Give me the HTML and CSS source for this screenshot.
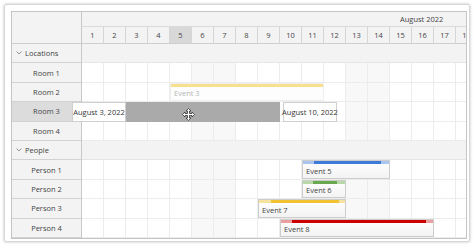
FILE: index.html
```html
<!DOCTYPE html>
<html>
<head>
<meta charset="utf-8">
<link rel="stylesheet" href="styles.css">
</head>
<body>
<div class="card">
  <div class="scheduler">
    <div class="rowheaders">
      <div class="corner"></div>
      <div class="rh group"><svg class="chev" width="6" height="4" viewBox="0 0 6 4"><polyline points="0.5,0.5 3,3 5.5,0.5" fill="none" stroke="#888" stroke-width="0.9"/></svg>Locations</div>
      <div class="rh">Room 1</div>
      <div class="rh">Room 2</div>
      <div class="rh active">Room 3</div>
      <div class="rh">Room 4</div>
      <div class="rh group"><svg class="chev" width="6" height="4" viewBox="0 0 6 4"><polyline points="0.5,0.5 3,3 5.5,0.5" fill="none" stroke="#888" stroke-width="0.9"/></svg>People</div>
      <div class="rh">Person 1</div>
      <div class="rh">Person 2</div>
      <div class="rh">Person 3</div>
      <div class="rh">Person 4</div>
    </div>
    <div class="main">
      <div class="month"><span class="month-label">August 2022</span></div>
      <div class="days">
        <div class="day">1</div><div class="day">2</div><div class="day">3</div><div class="day">4</div>
        <div class="day hl">5</div><div class="day">6</div><div class="day">7</div><div class="day">8</div>
        <div class="day">9</div><div class="day">10</div><div class="day">11</div><div class="day">12</div>
        <div class="day">13</div><div class="day">14</div><div class="day">15</div><div class="day">16</div>
        <div class="day">17</div><div class="day">18</div>
      </div>
      <div class="grid">
        <div class="row group"></div>
        <div class="row"></div>
        <div class="row">
          <div class="event ghost" style="left:88px;width:154px">
            <div class="bar"><div class="bar-fill" style="left:0;right:0"></div></div>
            <span class="etext">Event 3</span>
          </div>
        </div>
        <div class="row">
          <div class="label" style="left:-10px">August 3, 2022</div>
          <div class="shadow" style="left:44px;width:154px">
            <svg class="move" width="13" height="13" viewBox="0 0 13 13">
              <path d="M6.5 0.5 L9 3 L7.5 3 L7.5 5.5 L10 5.5 L10 4 L12.5 6.5 L10 9 L10 7.5 L7.5 7.5 L7.5 10 L9 10 L6.5 12.5 L4 10 L5.5 10 L5.5 7.5 L3 7.5 L3 9 L0.5 6.5 L3 4 L3 5.5 L5.5 5.5 L5.5 3 L4 3 Z" fill="#fff" stroke="#333" stroke-width="0.8" stroke-linejoin="round"/>
            </svg>
          </div>
          <div class="label" style="left:201px">August 10, 2022</div>
        </div>
        <div class="row"></div>
        <div class="row group"></div>
        <div class="row">
          <div class="event" style="left:220px;width:88px">
            <div class="bar blue-l"><div class="bar-fill blue" style="left:11px;right:8px"></div></div>
            <span class="etext">Event 5</span>
          </div>
        </div>
        <div class="row">
          <div class="event" style="left:220px;width:44px">
            <div class="bar green-l"><div class="bar-fill green" style="left:10px;right:8px"></div></div>
            <span class="etext">Event 6</span>
          </div>
        </div>
        <div class="row">
          <div class="event" style="left:176px;width:88px">
            <div class="bar yellow-l"><div class="bar-fill yellow" style="left:12px;right:6px"></div></div>
            <span class="etext">Event 7</span>
          </div>
        </div>
        <div class="row">
          <div class="event" style="left:198px;width:154px">
            <div class="bar red-l"><div class="bar-fill red" style="left:11px;right:7px"></div></div>
            <span class="etext">Event 8</span>
          </div>
        </div>
      </div>
    </div>
  </div>
</div>
</body>
</html>
```

FILE: styles.css
```css
* { box-sizing: border-box; }
html, body { margin: 0; padding: 0; background: #fff; }
body {
  font-family: "Open Sans", "Noto Sans", sans-serif;
  font-size: 7.5px;
  color: #333;
  width: 474px;
  height: 248px;
  overflow: hidden;
}
.card {
  margin: 4px 0 0 4px;
  width: 466px;
  height: 238px;
  border: 1px solid #d6d6d6;
  border-radius: 2px;
  box-shadow: 0 0 3px rgba(0,0,0,0.25);
  padding: 6px 2px 2px 6px;
  overflow: hidden;
}
.scheduler {
  display: flex;
  width: 456px;
  height: 228px;
  border: 1px solid #c4c4c4;
  background: #fff;
}
.rowheaders {
  width: 70px;
  flex: none;
  display: flex;
  flex-direction: column;
  border-right: 1px solid #c8c8c8;
  background: #f3f3f3;
}
.corner {
  height: 32px;
  flex: none;
  border-bottom: 1px solid #cfcfcf;
}
.rh {
  height: 19.4px;
  flex: none;
  display: flex;
  align-items: center;
  justify-content: center;
  border-bottom: 1px solid #d2d2d2;
  background: #f3f3f3;
  color: #444;
}
.rh.group {
  justify-content: flex-start;
  padding-left: 4px;
  gap: 3px;
}
.rh.active { background: #dcdcdc; }
.chev { display: block; flex: none; }
.main {
  flex: 1;
  display: flex;
  flex-direction: column;
  min-width: 0;
}
.month {
  height: 15px;
  flex: none;
  background: #f3f3f3;
  border-bottom: 1px solid #dadada;
  display: flex;
  align-items: center;
  padding-left: 318px;
  color: #444;
  white-space: nowrap;
}
.days {
  height: 17px;
  flex: none;
  display: flex;
  overflow: hidden;
  background: #f3f3f3;
  border-bottom: 1px solid #cfcfcf;
}
.day {
  width: 22px;
  flex: none;
  border-right: 1px solid #d6d6d6;
  display: flex;
  align-items: center;
  justify-content: center;
  color: #444;
}
.day.hl { background: #d8d8d8; }
.grid {
  flex: 1;
  display: flex;
  flex-direction: column;
  background:
    repeating-linear-gradient(to right, transparent 0 21px, #ececec 21px 22px),
    linear-gradient(to right, #fff 0 110px, #f8f8f8 110px 154px, #fff 154px 264px, #f8f8f8 264px 308px, #fff 308px);
}
.row {
  height: 19.4px;
  flex: none;
  position: relative;
  border-bottom: 1px solid #ececec;
}
.row.group { background: #f3f3f3; border-bottom-color: #e6e6e6; }
.event {
  position: absolute;
  top: 0;
  bottom: 0;
  border: 1px solid #cdcdcd;
  background: linear-gradient(#ffffff, #f3f3f3);
  display: flex;
  align-items: center;
  padding: 3px 0 0 3px;
  color: #444;
  white-space: nowrap;
  overflow: hidden;
}
.bar {
  position: absolute;
  left: 0;
  right: 0;
  top: 0;
  height: 3px;
}
.bar-fill { position: absolute; top: 0; bottom: 0; }
.blue-l { background: #a8c4ef; }
.blue { background: #3d79d9; }
.green-l { background: #b8d8a8; }
.green { background: #6aa84f; }
.yellow-l { background: #f7e3a0; }
.yellow { background: #f1c232; }
.red-l { background: #eaa0a0; }
.red { background: #cc0000; }
.event.ghost {
  border-color: #efefef;
  background: #fdfdfd;
  color: #b5b5b5;
}
.event.ghost .bar-fill { background: #f6e08e; }
.shadow {
  position: absolute;
  top: 0;
  bottom: -1px;
  background: #aaaaaa;
}
.move {
  position: absolute;
  left: 56px;
  top: 6px;
}
.label {
  position: absolute;
  top: 0;
  bottom: -1px;
  width: 54px;
  background: #fff;
  border: 1px solid #cfcfcf;
  display: flex;
  align-items: center;
  justify-content: center;
  color: #333;
  white-space: nowrap;
  z-index: 2;
}
```
